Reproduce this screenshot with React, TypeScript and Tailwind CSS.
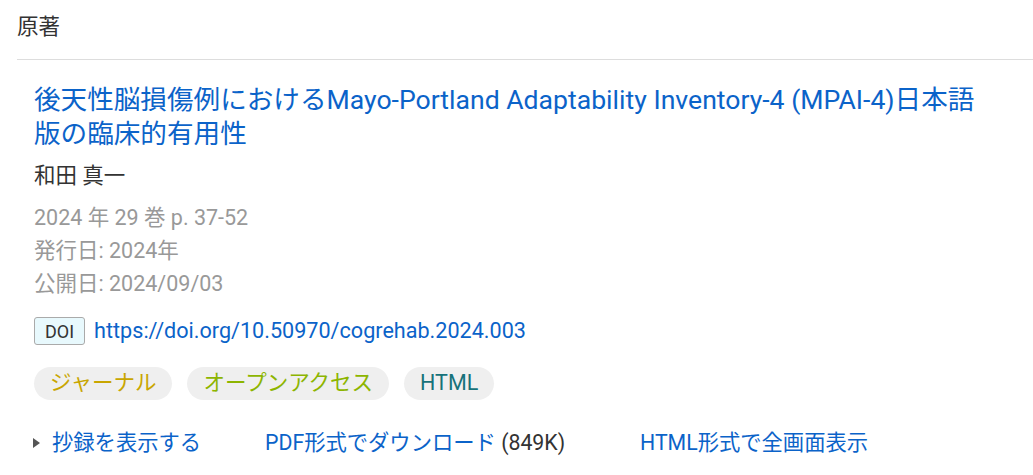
const font = { fontFamily: 'Roboto, "Noto Sans CJK JP", sans-serif' };

const tags = [
  { label: 'ジャーナル', color: 'text-[#c9a600]' },
  { label: 'オープンアクセス', color: 'text-[#8db500]' },
  { label: 'HTML', color: 'text-[#17727a]' },
];

export default function App() {
  return (
    <div className="w-[1033px] h-[475px] bg-white overflow-hidden" style={font}>
      <div className="ml-[17px] pt-[13px] pb-[18px] border-b border-[#dddddd]">
        <span className="text-[21.5px] leading-[28px] text-[#333333]">原著</span>
      </div>
      <div className="pl-[34px]">
        <div className="mt-[23px] w-[960px] text-[26.6px] leading-[34px] text-[#0b63c9]">
          後天性脳損傷例におけるMayo-Portland Adaptability Inventory-4 (MPAI-4)日本語版の臨床的有用性
        </div>
        <div className="mt-[10px] text-[21.5px] leading-[30px] text-[#333333]">和田 真一</div>
        <div className="mt-[10px] text-[21.5px] leading-[33px] text-[#999999]">
          <div>2024 年 29 巻 p. 37-52</div>
          <div>発行日: 2024年</div>
          <div>公開日: 2024/09/03</div>
        </div>
        <div className="mt-[17px] flex items-center h-[28px]">
          <span className="h-[28px] px-[10px] flex items-center bg-[#e8f9fd] border border-[#aaaaaa] rounded-[3px] text-[18px] text-[#333333]">
            DOI
          </span>
          <span className="ml-[9px] text-[21.6px] text-[#0b63c9]">https://doi.org/10.50970/cogrehab.2024.003</span>
        </div>
        <div className="mt-[22px] flex gap-[15px]">
          {tags.map((t) => (
            <span
              key={t.label}
              className={`h-[33px] px-[16px] flex items-center justify-center rounded-full bg-[#efefef] text-[21.5px] ${t.color}`}
            >
              {t.label}
            </span>
          ))}
        </div>
        <div className="mt-[28px] flex items-center text-[21.3px] leading-[30px]">
          <div className="w-[231px] flex items-center">
            <svg width="8" height="10" viewBox="0 0 8 10" className="ml-[-1px] mr-[11px]">
              <polygon points="0,0 7,5 0,10" fill="#555555" />
            </svg>
            <span className="text-[#0b63c9]">抄録を表示する</span>
          </div>
          <div className="w-[375px]">
            <span className="text-[#0b63c9]">PDF形式でダウンロード</span>
            <span className="text-[#333333]"> (849K)</span>
          </div>
          <span className="text-[#0b63c9]">HTML形式で全画面表示</span>
        </div>
      </div>
    </div>
  );
}
